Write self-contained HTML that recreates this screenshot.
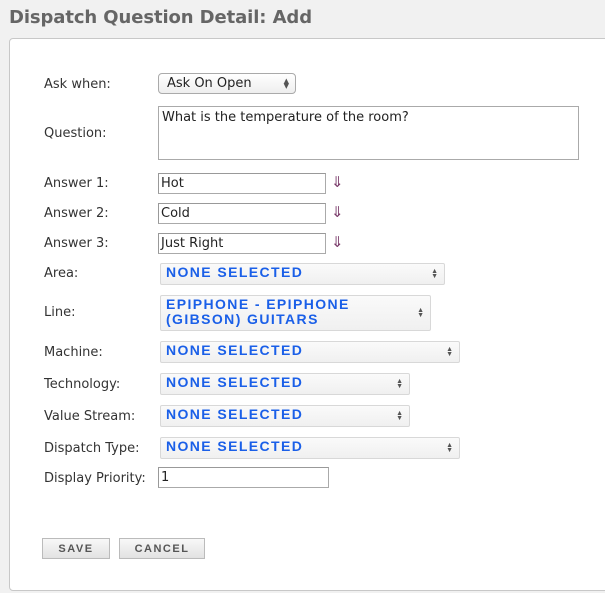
<!DOCTYPE html>
<html><head><style>
body{margin:0;width:605px;height:593px;background:#f1f1f1;position:relative;overflow:hidden;font-family:"DejaVu Sans",Verdana,sans-serif;}
.t{position:absolute;left:9px;top:7px;font:bold 18px "DejaVu Sans",sans-serif;color:#666;letter-spacing:-0.1px}
.panel{position:absolute;left:9px;top:38px;width:620px;height:551px;background:#fff;border:1px solid #c8c8c8;border-radius:4px;}
.l{position:absolute;left:44px;font-size:13px;color:#333;line-height:16px}
.in{position:absolute;left:158px;width:168px;border:1px solid #aaa;border-top-color:#999;border-left-color:#999;box-sizing:border-box;height:21px;font-size:13px;color:#222;padding:2px 2px;line-height:15px;background:#fff}
.s{position:absolute;left:160px;background:linear-gradient(#fafafa,#f0f0f0);border:1px solid #d8d8d8;border-radius:2px;box-sizing:border-box;font:bold 14px "Liberation Sans",Arial,sans-serif;letter-spacing:1.4px;color:#1a5fe8;padding:1px 5px;line-height:15px}
.ar{position:absolute;right:6px;top:50%;margin-top:-5px;font-size:7px;color:#555;line-height:5px;letter-spacing:0}
.arr{position:absolute;left:331px;font-size:15px;color:#7a3a6a;}
.b{position:absolute;top:538px;height:21px;box-sizing:border-box;border:1px solid #bbb;background:linear-gradient(#f8f8f8,#e2e2e2);font:bold 11px "Liberation Sans",Arial,sans-serif;letter-spacing:1.5px;color:#555;text-align:center;line-height:20px}
</style></head><body>
<div class="t">Dispatch Question Detail: Add</div>
<div class="panel"></div>
<div class="l" style="top:77px">Ask when:</div>
<div style="position:absolute;left:158px;top:73px;width:138px;height:21px;box-sizing:border-box;border:1px solid #aaa;border-radius:4px;background:linear-gradient(#fff,#eee);font-size:13px;color:#222;padding:2px 8px;line-height:15px">Ask On Open<span class="ar" style="font-size:7px">▲<br>▼</span></div>
<div class="l" style="top:126px">Question:</div>
<div style="position:absolute;left:158px;top:106px;width:421px;height:54px;box-sizing:border-box;border:1px solid #aaa;font-size:13px;color:#222;padding:3px 3px;line-height:15px">What is the temperature of the room?</div>
<div class="l" style="top:176px">Answer 1:</div><div class="in" style="top:173px">Hot</div><div class="arr" style="top:173px">⇓</div>
<div class="l" style="top:206px">Answer 2:</div><div class="in" style="top:203px">Cold</div><div class="arr" style="top:203px">⇓</div>
<div class="l" style="top:236px">Answer 3:</div><div class="in" style="top:233px">Just Right</div><div class="arr" style="top:233px">⇓</div>
<div class="l" style="top:266px">Area:</div>
<div class="s" style="top:263px;width:285px;height:22px">NONE SELECTED<span class="ar">▲<br>▼</span></div>
<div class="l" style="top:305px">Line:</div>
<div class="s" style="top:295px;width:271px;height:36px">EPIPHONE - EPIPHONE<br>(GIBSON) GUITARS<span class="ar">▲<br>▼</span></div>
<div class="l" style="top:345px">Machine:</div>
<div class="s" style="top:341px;width:300px;height:22px">NONE SELECTED<span class="ar">▲<br>▼</span></div>
<div class="l" style="top:377px">Technology:</div>
<div class="s" style="top:373px;width:250px;height:22px">NONE SELECTED<span class="ar">▲<br>▼</span></div>
<div class="l" style="top:409px">Value Stream:</div>
<div class="s" style="top:405px;width:250px;height:22px">NONE SELECTED<span class="ar">▲<br>▼</span></div>
<div class="l" style="top:441px">Dispatch Type:</div>
<div class="s" style="top:437px;width:300px;height:22px">NONE SELECTED<span class="ar">▲<br>▼</span></div>
<div class="l" style="top:471px">Display Priority:</div>
<div class="in" style="top:467px;width:171px">1</div>
<div class="b" style="left:42px;width:68px">SAVE</div>
<div class="b" style="left:119px;width:86px">CANCEL</div>
</body></html>
